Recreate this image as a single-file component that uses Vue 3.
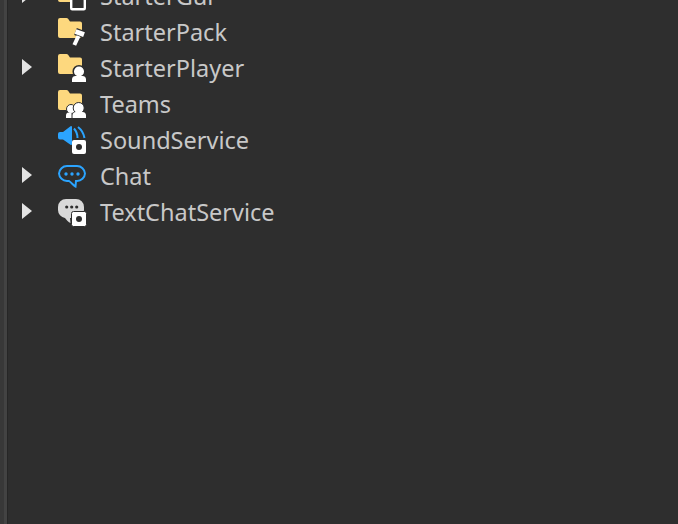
<script setup>
const rows = [
  { name: 'StarterGui', arrow: true, icon: 'gui' },
  { name: 'StarterPack', arrow: false, icon: 'pack' },
  { name: 'StarterPlayer', arrow: true, icon: 'player' },
  { name: 'Teams', arrow: false, icon: 'teams' },
  { name: 'SoundService', arrow: false, icon: 'sound' },
  { name: 'Chat', arrow: true, icon: 'chat' },
  { name: 'TextChatService', arrow: true, icon: 'textchat' },
]
const folder = 'M0 3a2 2 0 0 1 2-2h6.500a2 2 0 0 1 1.600.800L12 4.500h10a2 2 0 0 1 2 2V19a2 2 0 0 1-2 2H2a2 2 0 0 1-2-2z'
</script>

<template>
  <div class="panel">
    <div class="edge"></div>
    <ul class="tree">
      <li v-for="row in rows" :key="row.name" class="row">
        <span class="toggle"><span v-if="row.arrow" class="arrow"></span></span>
        <svg class="icon" width="30" height="30" viewBox="0 0 30 30">
          <template v-if="row.icon === 'gui'">
            <path :d="folder" fill="#fdd87e" />
            <rect x="13.200" y="12" width="13.600" height="16.200" rx="1" fill="#2e2e2e" stroke="#fff" stroke-width="2.400" />
          </template>
          <template v-if="row.icon === 'pack'">
            <path :d="folder" fill="#fdd87e" />
            <path d="M17.500 14.500l8.500 3.200" fill="none" stroke="#2e2e2e" stroke-width="7.500" />
            <path d="M17.500 14.500l8.500 3.200" fill="none" stroke="#fff" stroke-width="5" />
            <path d="M20.500 19l-4.200 9" fill="none" stroke="#fff" stroke-width="4" />
          </template>
          <template v-if="row.icon === 'player'">
            <path :d="folder" fill="#fdd87e" />
            <circle cx="21" cy="18.500" r="5.800" fill="#fff" stroke="#2e2e2e" stroke-width="1.500" />
            <path d="M14 29v-3a3.500 3.500 0 0 1 3.500-3h7a3.500 3.500 0 0 1 3.500 3v3z" fill="#fff" />
          </template>
          <template v-if="row.icon === 'teams'">
            <path :d="folder" fill="#fdd87e" />
            <circle cx="13" cy="20" r="4.500" fill="#fff" stroke="#2e2e2e" />
            <circle cx="20.700" cy="19" r="5.500" fill="#fff" stroke="#2e2e2e" />
            <path d="M8 29v-2.500a3 3 0 0 1 3-3h2.500V29z" fill="#fff" />
            <path d="M14.500 29v-3a3.500 3.500 0 0 1 3.500-3h6.500a3.500 3.500 0 0 1 3.500 3v3z" fill="#fff" />
          </template>
          <template v-if="row.icon === 'sound'">
            <path d="M0 9a2 2 0 0 1 2-2h3l7.500-5.700a1 1 0 0 1 1.500.800V19a1 1 0 0 1-1.500.800L5 14.500H2a2 2 0 0 1-2-2z" fill="#2ba4ff" />
            <path d="M16 3.500a14 14 0 0 1 3.500 9.500M20 2a18 18 0 0 1 6.500 11" fill="none" stroke="#2ba4ff" stroke-width="2" />
            <rect x="14" y="15" width="14" height="14" rx="2" fill="#fff" />
            <circle cx="21" cy="22" r="3" fill="#2e2e2e" />
          </template>
          <template v-if="row.icon === 'chat'">
            <path d="M9 5h10a8 8 0 0 1 8 7.500a8 8 0 0 1-8 7.500h-1l-.5 5.500c-2-1-4-4-6.500-5.500H9a8 8 0 0 1-8-7.500a8 8 0 0 1 8-7.500z" fill="none" stroke="#2ba4ff" stroke-width="2" />
            <circle cx="8" cy="13" r="1.700" fill="#2ba4ff" />
            <circle cx="14" cy="13" r="1.700" fill="#2ba4ff" />
            <circle cx="20" cy="13" r="1.700" fill="#2ba4ff" />
          </template>
          <template v-if="row.icon === 'textchat'">
            <path d="M8 2h10a8 8 0 0 1 8 8v3a8 8 0 0 1-8 8h-6l.5 5c-2-1-4-3-5.500-5.100A8 8 0 0 1 0 13v-3a8 8 0 0 1 8-8z" fill="#d9d9d9" />
            <circle cx="8.700" cy="10" r="1.600" fill="#2e2e2e" />
            <circle cx="13.700" cy="10" r="1.600" fill="#2e2e2e" />
            <circle cx="18.700" cy="10" r="1.600" fill="#2e2e2e" />
            <rect x="13.500" y="14.500" width="15" height="15" rx="2" fill="#fff" stroke="#2e2e2e" />
            <circle cx="21" cy="22" r="3" fill="#2e2e2e" />
          </template>
        </svg>
        <span class="label">{{ row.name }}</span>
      </li>
    </ul>
  </div>
</template>

<style scoped>
.panel {
  display: flex;
  height: 524px;
  overflow: hidden;
  background: #2e2e2e;
}

.edge {
  width: 4px;
  flex: none;
  background: #383838;
  border-right: 3px solid #434343;
  border-left: 0;
  box-shadow: 1px 0 0 #262626;
}

.tree {
  list-style: none;
  margin: -22px 0 0;
  padding: 0;
}

.row {
  display: flex;
  align-items: center;
  height: 36px;
}

.toggle {
  width: 15px;
  margin-left: 15px;
  margin-right: 21px;
  display: flex;
  flex: none;
  margin-bottom: 3px;
}

.arrow {
  width: 0;
  height: 0;
  border-left: 10px solid #e4e4e4;
  border-top: 8px solid transparent;
  border-bottom: 8px solid transparent;
}

.icon {
  flex: none;
  margin-right: 12px;
}

.label {
  font-family: "Noto Sans", sans-serif;
  font-size: 23.500px;
  color: #c8c8c8;
}
</style>

<style>
body {
  overflow: hidden;
}
</style>
